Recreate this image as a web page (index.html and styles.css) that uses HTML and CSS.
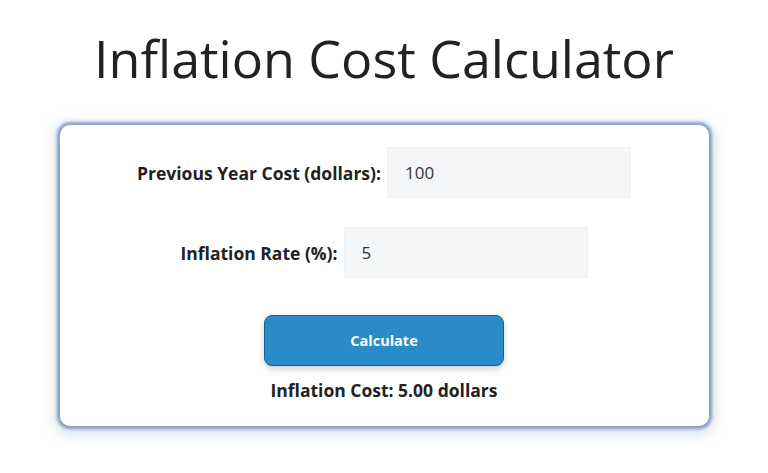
FILE: index.html
```html
<!DOCTYPE html>
<html lang="en">
<head>
<meta charset="utf-8">
<title>Inflation Cost Calculator</title>
<link rel="stylesheet" href="styles.css">
</head>
<body>
<main class="page">
  <h1 class="title">Inflation Cost Calculator</h1>
  <section class="card">
    <div class="row">
      <label class="label" for="prev">Previous Year Cost (dollars):</label>
      <input class="field" id="prev" type="text" value="100">
    </div>
    <div class="row">
      <label class="label" for="rate">Inflation Rate (%):</label>
      <input class="field" id="rate" type="text" value="5">
    </div>
    <button class="btn" type="button">Calculate</button>
    <p class="result">Inflation Cost: 5.00 dollars</p>
  </section>
</main>
</body>
</html>
```

FILE: styles.css
```css
html, body {
  margin: 0;
  padding: 0;
  background: #ffffff;
}
body {
  font-family: "Open Sans", "Noto Sans", sans-serif;
  color: #222;
}
.page {
  display: flex;
  flex-direction: column;
  align-items: center;
  padding: 22px 0 40px;
}
.title {
  margin: 0;
  font-weight: 400;
  font-size: 52px;
  line-height: 72px;
  color: #222;
  letter-spacing: 0;
}
.card {
  margin-top: 31px;
  width: 649px;
  height: 301px;
  box-sizing: border-box;
  background: #fff;
  border-radius: 10px;
  box-shadow: 0 0 3px 3px rgba(110, 145, 185, 0.8), 0 3px 14px 4px rgba(110, 145, 185, 0.35);
  display: flex;
  flex-direction: column;
  align-items: center;
  padding-top: 22px;
}
.row {
  display: flex;
  align-items: center;
  gap: 6px;
  margin-bottom: 29px;
}
.label {
  font-weight: 700;
  font-size: 17.5px;
  color: #222;
}
.field {
  width: 244px;
  height: 51px;
  box-sizing: border-box;
  border: 1px solid #eef0f2;
  background: #f5f6f8;
  padding: 0 17px;
  font-family: "Open Sans", "Noto Sans", sans-serif;
  font-size: 17px;
  color: #333;
  outline: none;
}
.btn {
  margin-top: 8px;
  width: 240px;
  height: 51px;
  border-radius: 8px;
  border: 1.5px solid #1d5f91;
  background: #2a8bc9;
  color: #fff;
  font-family: "Open Sans", "Noto Sans", sans-serif;
  font-weight: 700;
  font-size: 14.5px;
  box-shadow: 0 3px 6px rgba(40, 80, 120, 0.25);
}
.result {
  margin: 12px 0 0;
  font-weight: 700;
  font-size: 17.5px;
  color: #222;
}
```
